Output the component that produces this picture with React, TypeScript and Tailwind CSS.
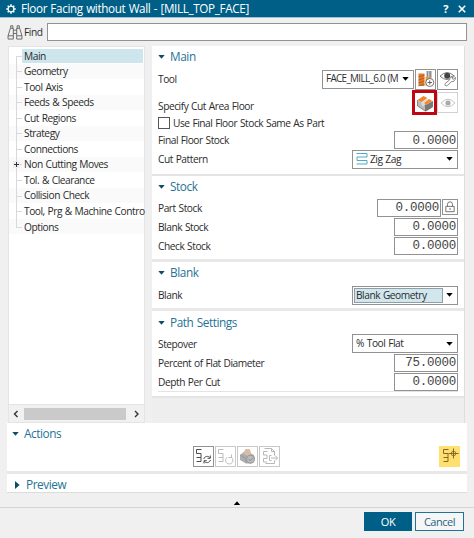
import type { ReactNode } from "react";

const NAV_ITEMS = [
  "Main",
  "Geometry",
  "Tool Axis",
  "Feeds & Speeds",
  "Cut Regions",
  "Strategy",
  "Connections",
  "Non Cutting Moves",
  "Tol. & Clearance",
  "Collision Check",
  "Tool, Prg & Machine Contro",
  "Options",
];

const Caret = ({ className = "h-[5px] w-[8px]" }: { className?: string }) => (
  <svg viewBox="0 0 8 5" className={`shrink-0 ${className}`}>
    <path d="M0 0h8L4 4.6z" fill="currentColor" />
  </svg>
);

const SectionTitle = ({ children, className = "" }: { children: ReactNode; className?: string }) => (
  <div className={`flex items-center text-[11.8px] tracking-[-0.42px] text-[#1f7396] ${className}`}>
    <Caret className="mr-[5px] h-[4px] w-[7px] text-[#0b4d6c]" />
    {children}
  </div>
);

const Row = ({
  label,
  children,
  className = "h-[19px]",
}: {
  label: string;
  children?: ReactNode;
  className?: string;
}) => (
  <div className={`flex items-center justify-between ${className}`}>
    <span className="pt-[1px]">{label}</span>
    {children}
  </div>
);

const NumberField = ({ value }: { value: string }) => (
  <div className="flex h-[18px] w-[64px] items-center justify-end border border-[#929292] bg-white pt-[2px] pr-[1px] font-['Liberation_Mono',monospace] text-[12.5px] tracking-[-0.25px] text-[#444]">
    {value}
  </div>
);

const Select = ({ children, className = "w-[106px]" }: { children: ReactNode; className?: string }) => (
  <div className={`flex h-[19px] items-center border border-[#929292] bg-white pr-[4px] ${className}`}>
    {children}
    <Caret className="ml-auto h-[4px] w-[7px] text-black" />
  </div>
);

const IconButton = ({
  children,
  className = "border-[#929292]",
}: {
  children: ReactNode;
  className?: string;
}) => (
  <div className={`flex h-[21px] w-[21px] shrink-0 items-center justify-center border bg-white ${className}`}>
    {children}
  </div>
);

const GearIcon = () => (
  <svg viewBox="0 0 12 12" className="h-[10px] w-[10px]" fill="none" stroke="white">
    <circle cx="6" cy="6" r="3.5" strokeWidth="1.6" />
    <path
      d="M6 .3v2M6 9.7v2M.3 6h2M9.7 6h2M2 2l1.4 1.4M8.6 8.6L10 10M10 2L8.6 3.4M3.4 8.6L2 10"
      strokeWidth="1.8"
    />
  </svg>
);

const BinocularsIcon = () => (
  <svg viewBox="0 0 16 16" className="h-[15px] w-[16px]" fill="none" stroke="#555" strokeWidth=".9">
    <path d="M.6 11.5 3 3.5h3.2v8M.6 11.5h5.6V15H.6zM15.4 11.5 13 3.5H9.8v8M9.8 11.5h5.6V15H9.8zM3.4 3.5V.8h2.3v2.7M10.3 3.5V.8h2.3v2.7M6.2 5.5h3.6M6.2 9h3.6" />
  </svg>
);

const NewToolIcon = () => (
  <svg viewBox="0 0 18 18" className="h-[18px] w-[18px]" fill="none">
    <path d="M9.5 1h5v6.5h-5z" fill="#8d9196" />
    <path d="M11 1h1.3v6H11z" fill="#c5c8cb" />
    <path d="M1.5 3.5h6v12.5h-6z" fill="#e07a28" />
    <path d="m1.5 7 6-2M1.5 10l6-2M1.5 13l6-2M1.5 16l6-2" stroke="#a4592a" strokeWidth=".8" />
    <path d="M8.5 7h6v3l-6 6z" fill="#f0983a" />
    <path d="M9 10.5l4-2.5" stroke="#b4682a" strokeWidth=".8" />
    <circle cx="12.8" cy="12.5" r="4" fill="white" stroke="#666" strokeWidth=".9" />
    <path d="M12.8 10.3v4.4M10.6 12.5H15" stroke="#555" strokeWidth=".9" />
  </svg>
);

const EditToolIcon = () => (
  <svg viewBox="0 0 18 18" className="h-[18px] w-[18px]" fill="none" stroke="#777">
    <path d="M1 6.2Q8 -1 15.5 6.2Q8 12.8 1 6.2z" />
    <circle cx="8.2" cy="5.8" r="3" fill="#444" stroke="none" />
    <path
      d="M16.5 7.5 14.3 9.3l-1.5-1.2.6-2c-2 .3-3 1.8-2.6 3.6L6.3 13.5c-1.2 1.4.6 3.3 2 2l4.2-3.9c2.2.6 4-1.4 4-4.1z"
      fill="white"
      strokeWidth=".9"
    />
  </svg>
);

const PartIcon = () => (
  <svg viewBox="0 0 18 18" className="h-[18px] w-[18px] shrink-0">
    <path d="M1.5 6 9.5 11v6L1.5 12z" fill="#b9babc" />
    <path d="m9.5 11 7-3.8v5.8l-7 4.2z" fill="#77797c" />
    <path d="M1.5 6 7.5 2l4 2L5.5 8.3z" fill="#f0862a" />
    <path d="m9.5 11.3 7-4.2-3.5-2.2-5 3.8z" fill="#f08a2c" />
    <path d="m5.5 8.3 6-4.3v2L8 8.7v3.8l-2.5-1.5z" fill="#dcdcdd" />
    <path d="M1.5 6v6l8 5.2 7-4.2V7.2M9.5 11v6" fill="none" stroke="#6d6259" strokeWidth=".7" />
  </svg>
);

const EyeIcon = () => (
  <svg viewBox="0 0 16 12" className="h-[12px] w-[16px]" fill="none" stroke="#c4c4c4">
    <path d="M1 6Q8 -1.5 15 6Q8 13.5 1 6z" />
    <circle cx="8" cy="6" r="2.6" fill="#aaa" stroke="none" />
  </svg>
);

const LockIcon = () => (
  <svg viewBox="0 0 12 12" className="h-[12px] w-[12px]" fill="none" stroke="#666" strokeWidth=".9">
    <path d="M1.8 5.4h8.4v5.3H1.8zM3.5 5.2V3.3a2.5 2.5 0 0 1 5 0v1.9M6 7v2" />
  </svg>
);

const ZigZagIcon = () => (
  <svg viewBox="0 0 12 12" className="h-[12px] w-[12px] shrink-0" fill="none" stroke="#4fabc4">
    <path d="M.5 .5H11v3.5H1v3.5h10V11H.5" />
  </svg>
);

// Shared tool path outline used by the generate and replay buttons
const PathOutline = () => <path d="M7.5 2.5h-5v4H7v4H2.5M2.5 14.5H7v-4" />;

const GenerateIcon = () => (
  <svg viewBox="0 0 19 19" className="h-[19px] w-[19px]" fill="none" stroke="#4d4d4d">
    <PathOutline />
    <path d="M9.8 12c.8-3 4.8-3.5 6.3-1.2M16.3 8.5v2.8h-2.8M16.5 13c-.8 3-4.8 3.5-6.3 1.2M10 16.500v-2.800h2.800" />
  </svg>
);

const ReplayIcon = () => (
  <svg viewBox="0 0 19 19" className="h-[19px] w-[19px]" fill="none" stroke="#bbb">
    <PathOutline />
    <path d="M15.3 10.2a3.7 3.7 0 1 1-4.1 0M15.5 7.5v3h-3" />
  </svg>
);

const VerifyIcon = () => (
  <svg viewBox="0 0 19 19" className="h-[19px] w-[19px]">
    <path d="m2 8 5-4 9 4 1 4-3 4.5H8L2 13z" fill="#adadad" />
    <path d="m5.5 6.5 2-4.5 4 0 2 4.5-4 2.5z" fill="#d8bca6" />
    <path d="m2 8 6 3.5V16M8 11.5 15 8" fill="none" stroke="#999" />
    <circle cx="12.5" cy="12.2" r="4" fill="#bbb" stroke="#999" />
    <path d="m10.5 12 1.7 1.7 2.8-3" fill="none" stroke="#8d8d8d" />
  </svg>
);

const PostIcon = () => (
  <svg viewBox="0 0 19 19" className="h-[19px] w-[19px]" fill="none" stroke="#b8b8b8">
    <path d="M4.5 1.5h7l3 3v4M14.5 13.5v3h-9M11.5 1.5v3h3" />
    <path d="M7.500 4.500h-4V8H7v3.500H3.500V15H7" />
    <path d="M9.500 8.500v5h2M9.500 8.500h2M11 11h6.500M15 8.500l2.500 2.500-2.500 2.500" />
  </svg>
);

const DisplayPathIcon = () => (
  <svg viewBox="0 0 21 21" className="h-[21px] w-[21px]" fill="none" stroke="#80692a">
    <path d="M9.5 3.5h-5v4H9v4H4.5M4.5 15.5H9v-4" />
    <path d="M14.5 2.5v10M9.5 7.5h10" />
    <circle cx="14.5" cy="7.5" r="2.3" strokeWidth=".8" />
  </svg>
);

const NavTree = () => (
  <div className="flex h-[377px] w-[137px] flex-col border border-[#e4e4e4] bg-white">
    <div className="pt-px">
      {NAV_ITEMS.map((item, i) => (
        <div
          key={item}
          className={`flex h-[15.54px] items-center ${i % 2 ? "bg-[#fafafa]" : ""}`}
        >
          <div className="relative h-full w-[13px] shrink-0">
            <div
              className={`absolute left-[7px] w-px bg-[#d9d9d9] ${
                i === 0 ? "top-1/2 bottom-0" : i === NAV_ITEMS.length - 1 ? "top-0 bottom-1/2" : "inset-y-0"
              }`}
            />
            <div className="absolute top-1/2 left-[7px] h-px w-[6px] bg-[#d9d9d9]" />
            {item === "Non Cutting Moves" && (
              <svg viewBox="0 0 7 7" className="absolute top-[4px] left-[4px] h-[7px] w-[7px]">
                <path d="M0 0h7v7H0z" fill="#eee" />
                <path d="M1 3.5h5M3.5 1v5" stroke="#333" />
              </svg>
            )}
          </div>
          <div
            className={`flex h-[14.5px] flex-1 items-center pl-[2px] ${i === 0 ? "mr-px bg-[#cde5ec]" : ""}`}
          >
            {item}
          </div>
        </div>
      ))}
    </div>
    <div className="mt-auto flex h-[18px] items-center border-t border-[#e4e4e4] bg-[#f1f1f1] text-[#333]">
      <svg viewBox="0 0 15 12" className="h-[12px] w-[15px]" fill="none" stroke="currentColor" strokeWidth="1.4">
        <path d="M8.5 3 5.5 6l3 3" />
      </svg>
      <div className="h-[12px] w-[102px] bg-[#cacaca]" />
      <svg viewBox="0 0 18 12" className="h-[12px] w-[18px]" fill="none" stroke="currentColor" strokeWidth="1.4">
        <path d="m9 3 3 3-3 3" />
      </svg>
    </div>
  </div>
);

export default function App() {
  return (
    <div className="flex h-[538px] w-[474px] flex-col overflow-hidden bg-[#f0f0f0] font-['Open_Sans','Noto_Sans',sans-serif] text-[10.2px] leading-none tracking-[-0.46px] whitespace-nowrap text-[#2b2b2b] [word-spacing:0.6px]">
      <header className="flex h-[18px] shrink-0 items-center border-b border-[#9cc3d2] bg-[#005f87] pl-[6px] text-white">
        <GearIcon />
        <span className="ml-[5px] text-[11.7px] tracking-[-0.35px]">Floor Facing without Wall - [MILL_TOP_FACE]</span>
        <span className="ml-auto text-[11px] font-bold">?</span>
        <svg viewBox="0 0 8 8" className="mr-[8px] ml-[10px] h-[8px] w-[8px]" stroke="white" strokeWidth="1.6">
          <path d="m.8.8 6.4 6.4M7.2.8.8 7.2" />
        </svg>
      </header>

      <div className="flex h-[28px] shrink-0 items-center pr-[7px] pl-[7px]">
        <BinocularsIcon />
        <span className="ml-[1px] w-[23px]">Find</span>
        <div className="h-[18px] flex-1 border border-[#929292] bg-white" />
      </div>

      <div className="flex h-[377px] shrink-0 gap-[7px] pl-[8px]">
        <NavTree />
        <div className="flex w-[313px] flex-col border-r border-[#dedede] bg-[#eeeeee]">
          <section className="h-[130px] border-b-2 border-[#e4e4e4] bg-white px-[6px]">
            <SectionTitle className="h-[21px]">Main</SectionTitle>
            <Row label="Tool" className="h-[23px] pt-[1px]">
              <div className="flex items-center gap-[1px]">
                <Select className="w-[92px]">
                  <span className="pl-[3px] text-[9.9px] tracking-[-0.65px]">FACE_MILL_6.0 (M</span>
                </Select>
                <IconButton>
                  <NewToolIcon />
                </IconButton>
                <IconButton>
                  <EditToolIcon />
                </IconButton>
              </div>
            </Row>
            <div className="flex h-[25px] items-center justify-between">
              <span className="pt-[8px]">Specify Cut Area Floor</span>
              <div className="flex items-center">
                <div className="flex h-[25px] w-[25px] items-center justify-center border-3 border-[#c00612]">
                  <PartIcon />
                </div>
                <IconButton className="border-[#d2d2d2]">
                  <EyeIcon />
                </IconButton>
              </div>
            </div>
            <div className="flex h-[16px] items-center">
              <div className="mr-[3px] h-[12px] w-[12px] border border-[#555]" />
              Use Final Floor Stock Same As Part
            </div>
            <Row label="Final Floor Stock" className="h-[18px]">
              <NumberField value="0.0000" />
            </Row>
            <Row label="Cut Pattern" className="h-[20px]">
              <Select>
                <span className="ml-[3px] flex items-center gap-[2px]">
                  <ZigZagIcon />
                  Zig Zag
                </span>
              </Select>
            </Row>
          </section>
          <section className="h-[86px] border-b-3 border-[#e8e8e8] bg-white px-[6px]">
            <SectionTitle className="h-[22px]">Stock</SectionTitle>
            <Row label="Part Stock">
              <div className="flex gap-[1px]">
                <NumberField value="0.0000" />
                <div className="flex h-[16px] w-[16px] items-center justify-center border border-[#929292]">
                  <LockIcon />
                </div>
              </div>
            </Row>
            <Row label="Blank Stock">
              <NumberField value="0.0000" />
            </Row>
            <Row label="Check Stock">
              <NumberField value="0.0000" />
            </Row>
          </section>
          <section className="h-[49px] border-b-3 border-[#e8e8e8] bg-white px-[6px]">
            <SectionTitle className="h-[21px]">Blank</SectionTitle>
            <Row label="Blank" className="h-[24px]">
              <Select>
                <span className="ml-px flex h-[15px] w-[89px] items-center border border-[#8f9fa5] bg-[#d2e7ed] pl-px">
                  Blank Geometry
                </span>
              </Select>
            </Row>
          </section>
          <section className="h-[87px] border-b-2 border-[#e4e4e4] bg-white px-[6px]">
            <SectionTitle className="h-[23px]">Path Settings</SectionTitle>
            <Row label="Stepover">
              <Select>
                <span className="pl-[3px]">% Tool Flat</span>
              </Select>
            </Row>
            <Row label="Percent of Flat Diameter">
              <NumberField value="75.0000" />
            </Row>
            <Row label="Depth Per Cut">
              <NumberField value="0.0000" />
            </Row>
            <div className="border-b border-[#e4e4e4]" />
          </section>
        </div>
      </div>

      <section className="mx-[7px] h-[51px] shrink-0 border-b-3 border-[#e8e8e8] bg-white px-[5px]">
        <SectionTitle className="h-[21px]">Actions</SectionTitle>
        <div className="flex items-center pt-[2px] pl-[181px]">
          <div className="flex gap-px">
            <IconButton>
              <GenerateIcon />
            </IconButton>
            <IconButton className="border-[#c8c8c8]">
              <ReplayIcon />
            </IconButton>
            <IconButton className="border-[#c8c8c8]">
              <VerifyIcon />
            </IconButton>
            <IconButton className="border-[#c8c8c8]">
              <PostIcon />
            </IconButton>
          </div>
          <div className="mr-[2px] ml-auto bg-[#ffdf6e]">
            <DisplayPathIcon />
          </div>
        </div>
      </section>
      <section className="mx-[7px] h-[19px] shrink-0 border-b border-[#dcdcdc] bg-white px-[5px]">
        <div className="flex h-[21px] items-center text-[11.8px] tracking-[-0.42px] text-[#1f7396]">
          <svg viewBox="0 0 5 8" className="mr-[6px] ml-[3px] h-[8px] w-[5px] text-[#0b4d6c]">
            <path d="M0 0v8l4.6-4z" fill="currentColor" />
          </svg>
          Preview
        </div>
      </section>
      <div className="flex h-[15px] shrink-0 items-end justify-center border-b border-[#d5d5d5] pb-[2px]">
        <Caret className="h-[4px] w-[8px] rotate-180 text-black" />
      </div>
      <footer className="flex justify-end gap-[3px] pt-[4px] pr-[10px] text-[11px]">
        <button className="h-[19px] w-[48px] bg-[#005f87] text-white">OK</button>
        <button className="h-[19px] w-[49px] border border-[#1f7396] bg-[#f6f6f6] text-[#1f6484]">Cancel</button>
      </footer>
    </div>
  );
}
